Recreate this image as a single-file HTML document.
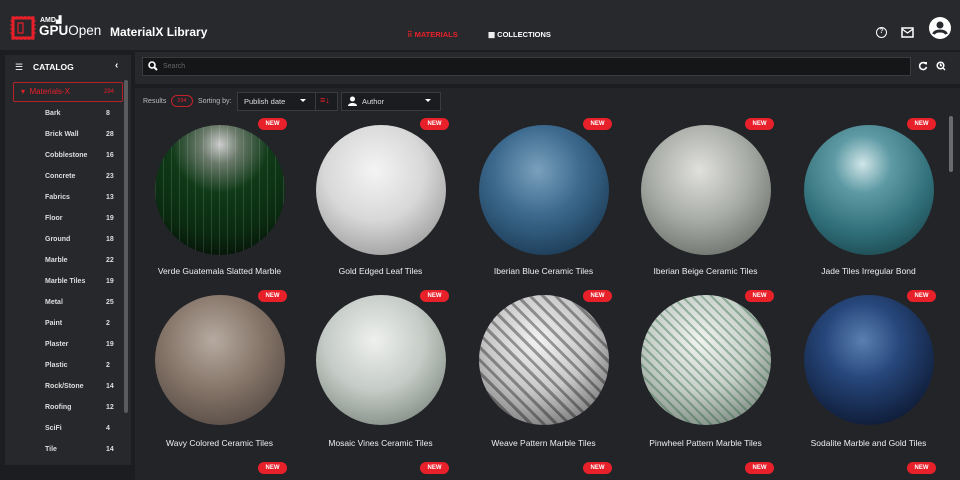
<!DOCTYPE html>
<html><head><meta charset="utf-8"><style>
*{margin:0;padding:0;box-sizing:border-box}
body{width:960px;height:480px;background:#1c1d20;font-family:"Liberation Sans",sans-serif;color:#e6e6e6;position:relative;overflow:hidden;font-size:8px}
.hdr{position:absolute;left:0;top:0;width:960px;height:50px;background:#28292d}
.abs{position:absolute}
.side{position:absolute;left:5px;top:55px;width:126px;height:410px;background:#27282c}
.main{position:absolute;left:135px;top:88px;width:825px;height:392px;background:#232428}
.srch{position:absolute;left:135px;top:52px;width:825px;height:32px;background:#27282c}
.item{position:absolute;left:45px;font-size:7px;font-weight:bold;color:#ddd}
.cnt{position:absolute;left:106px;font-size:7px;font-weight:bold;color:#ddd}
.sph{position:absolute;width:130px;height:130px;border-radius:50%}
.new{position:absolute;width:29px;height:12px;border-radius:6px;background:#e8202a;color:#fff;font-size:6px;font-weight:bold;text-align:center;line-height:12px}
.ttl{position:absolute;width:163px;text-align:center;font-size:8.5px;color:#eee}
</style></head><body>
<div class="hdr"></div>
<svg class="abs" style="left:9px;top:15px" width="28" height="26"><rect x="4" y="3" width="20" height="20" fill="none" stroke="#e8202a" stroke-width="3"/><path d="M4 1v2M8 1v2M12 1v2M16 1v2M20 1v2M24 1v2M4 23v2M8 23v2M12 23v2M16 23v2M20 23v2M24 23v2M1 6h3M1 10h3M1 14h3M1 18h3M24 6h3M24 10h3M24 14h3M24 18h3" stroke="#e8202a"/><rect x="9" y="8" width="5" height="10" fill="none" stroke="#e8202a" stroke-width="1.2"/></svg>
<div class="abs" style="left:40px;top:16px;font-size:7px;font-weight:bold;color:#fff">AMD▟</div>
<div class="abs" style="left:39px;top:23px;font-size:13.5px;color:#fff"><b>GPU</b>Open</div>
<div class="abs" style="left:110px;top:25px;font-size:12px;font-weight:bold;color:#fff">MaterialX Library</div>
<div class="abs" style="left:407px;top:30px;font-size:7.5px;font-weight:bold;color:#e8202a">⠿ MATERIALS</div>
<div class="abs" style="left:488px;top:30px;font-size:7.5px;font-weight:bold;color:#fff">▦ COLLECTIONS</div>
<div class="abs" style="left:876px;top:27px;width:11px;height:11px;border:1.5px solid #fff;border-radius:50%;font-size:7px;text-align:center;line-height:8px;font-weight:bold">?</div>
<svg class="abs" style="left:901px;top:27px" width="13" height="11"><rect x="1" y="1" width="11" height="9" fill="none" stroke="#fff" stroke-width="1.5"/><path d="M1 2l5.5 4 5.5-4" stroke="#fff" stroke-width="1.3" fill="none"/></svg>
<svg class="abs" style="left:929px;top:17px" width="22" height="22"><circle cx="11" cy="11" r="11" fill="#fff"/><circle cx="11" cy="8" r="3.5" fill="#28292d"/><path d="M4.5 17c2-4 11-4 13 0" stroke="#28292d" stroke-width="3" fill="none"/></svg>

<div class="side"></div>
<div class="abs" style="left:15px;top:62px;font-size:9px;color:#fff">☰</div>
<div class="abs" style="left:33px;top:62px;font-size:8.5px;font-weight:bold;color:#fff">CATALOG</div>
<div class="abs" style="left:115px;top:60px;font-size:10px;font-weight:bold;color:#fff">‹</div>
<div class="abs" style="left:13px;top:82px;width:110px;height:20px;border:1px solid #b5222a;border-radius:2px"></div>
<div class="abs" style="left:21px;top:87px;font-size:8px;color:#e8202a">▾ &nbsp;Materials-X</div>
<div class="abs" style="left:104px;top:89px;font-size:6px;color:#e8202a">294</div>
<div class="abs" style="left:124px;top:80px;width:4px;height:333px;background:#5a5b5f;border-radius:2px"></div>
<div class="item" style="top:110px">Bark</div><div class="cnt" style="top:110px">8</div>
<div class="item" style="top:131px">Brick Wall</div><div class="cnt" style="top:131px">28</div>
<div class="item" style="top:152px">Cobblestone</div><div class="cnt" style="top:152px">16</div>
<div class="item" style="top:173px">Concrete</div><div class="cnt" style="top:173px">23</div>
<div class="item" style="top:194px">Fabrics</div><div class="cnt" style="top:194px">13</div>
<div class="item" style="top:215px">Floor</div><div class="cnt" style="top:215px">19</div>
<div class="item" style="top:236px">Ground</div><div class="cnt" style="top:236px">18</div>
<div class="item" style="top:257px">Marble</div><div class="cnt" style="top:257px">22</div>
<div class="item" style="top:278px">Marble Tiles</div><div class="cnt" style="top:278px">19</div>
<div class="item" style="top:299px">Metal</div><div class="cnt" style="top:299px">25</div>
<div class="item" style="top:320px">Paint</div><div class="cnt" style="top:320px">2</div>
<div class="item" style="top:341px">Plaster</div><div class="cnt" style="top:341px">19</div>
<div class="item" style="top:362px">Plastic</div><div class="cnt" style="top:362px">2</div>
<div class="item" style="top:383px">Rock/Stone</div><div class="cnt" style="top:383px">14</div>
<div class="item" style="top:404px">Roofing</div><div class="cnt" style="top:404px">12</div>
<div class="item" style="top:425px">SciFi</div><div class="cnt" style="top:425px">4</div>
<div class="item" style="top:446px">Tile</div><div class="cnt" style="top:446px">14</div>

<div class="srch"></div>
<div class="abs" style="left:142px;top:57px;width:769px;height:19px;background:#151618;border:1px solid #3a3b3f"></div>
<svg class="abs" style="left:148px;top:61px" width="10" height="10"><circle cx="4" cy="4" r="3" stroke="#fff" stroke-width="1.6" fill="none"/><path d="M6 6l3 3" stroke="#fff" stroke-width="2"/></svg>
<div class="abs" style="left:163px;top:63px;font-size:7px;color:#666">Search</div>
<svg class="abs" style="left:918px;top:61px" width="10" height="10"><path d="M8 3A3.5 3.5 0 1 0 8.5 6" stroke="#fff" stroke-width="1.6" fill="none"/><path d="M6 1h3v3z" fill="#fff"/></svg>
<svg class="abs" style="left:936px;top:61px" width="10" height="10"><circle cx="4.5" cy="4.5" r="3.3" stroke="#fff" stroke-width="1.5" fill="none"/><path d="M4.5 2.5v2h1.5M7 7l2 2" stroke="#fff" stroke-width="1.4" fill="none"/></svg>

<div class="main"></div>
<div class="abs" style="left:143px;top:98px;font-size:7px;color:#bbb">Results</div>
<div class="abs" style="left:171px;top:95px;width:22px;height:12px;border:1px solid #c5222a;border-radius:6px;font-size:5.5px;color:#e8202a;text-align:center;line-height:10px">294</div>
<div class="abs" style="left:198px;top:98px;font-size:7px;color:#bbb">Sorting by:</div>
<div class="abs" style="left:237px;top:92px;width:101px;height:19px;background:#1b1c1f;border:1px solid #3a3b3f"></div>
<div class="abs" style="left:244px;top:97px;font-size:7.5px;color:#ddd">Publish date</div>
<div class="abs" style="left:300px;top:99px;width:0;height:0;border-left:3px solid transparent;border-right:3px solid transparent;border-top:3px solid #fff"></div>
<div class="abs" style="left:315px;top:92px;width:1px;height:19px;background:#3a3b3f"></div>
<div class="abs" style="left:320px;top:95px;font-size:9px;color:#e8202a;font-weight:bold">≡↓</div>
<div class="abs" style="left:341px;top:92px;width:100px;height:19px;background:#1b1c1f;border:1px solid #3a3b3f"></div>
<svg class="abs" style="left:348px;top:96px" width="9" height="10"><circle cx="4.5" cy="3" r="2.5" fill="#fff"/><path d="M0 10c0-4 9-4 9 0z" fill="#fff"/></svg>
<div class="abs" style="left:362px;top:97px;font-size:7.5px;color:#ddd">Author</div>
<div class="abs" style="left:425px;top:99px;width:0;height:0;border-left:3px solid transparent;border-right:3px solid transparent;border-top:3px solid #fff"></div>
<div class="abs" style="left:949px;top:116px;width:4px;height:56px;background:#6a6b6f;border-radius:2px"></div>

<div class="sph" style="left:155px;top:125px;background:repeating-linear-gradient(90deg,rgba(255,255,255,.12) 0 1px,transparent 1px 8px),radial-gradient(circle at 50% 15%,#ccc 0,#6a7a6a 15%,#0f3a18 38%,#0a2a10 70%,#040804 100%)"></div>
<div class="sph" style="left:316px;top:125px;background:radial-gradient(circle at 45% 35%,#f4f4f4 0,#d8d8d8 45%,#9a9a9a 85%,#555 100%)"></div>
<div class="sph" style="left:479px;top:125px;background:radial-gradient(circle at 45% 35%,#7aa0bc 0,#3c6a8e 40%,#1d3d58 80%,#0b1a28 100%)"></div>
<div class="sph" style="left:641px;top:125px;background:radial-gradient(circle at 45% 35%,#e0e0dc 0,#a8aca6 45%,#6a6e68 85%,#333 100%)"></div>
<div class="sph" style="left:804px;top:125px;background:radial-gradient(circle at 45% 30%,#cfe5e8 0,#5e9aa4 25%,#2f6e78 60%,#153a40 95%)"></div>
<div class="sph" style="left:155px;top:295px;background:radial-gradient(circle at 45% 35%,#b6aaa0 0,#857468 45%,#544a44 85%,#2a2522 100%)"></div>
<div class="sph" style="left:316px;top:295px;background:radial-gradient(circle at 45% 35%,#eef0ee 0,#c5cbc6 45%,#7e8a82 85%,#3a403c 100%)"></div>
<div class="sph" style="left:479px;top:295px;background:repeating-linear-gradient(45deg,rgba(0,0,0,.35) 0 3px,transparent 3px 9px),radial-gradient(circle at 45% 35%,#f2f2f2 0,#c8c8c8 45%,#777 85%,#333 100%)"></div>
<div class="sph" style="left:641px;top:295px;background:repeating-linear-gradient(45deg,rgba(20,90,50,.35) 0 2px,transparent 2px 7px),radial-gradient(circle at 45% 35%,#f0f2f0 0,#c8d0ca 45%,#7a887e 85%,#333 100%)"></div>
<div class="sph" style="left:804px;top:295px;background:radial-gradient(circle at 45% 35%,#5a7fb0 0,#26467a 35%,#11203e 75%,#050a14 100%)"></div>

<div class="new" style="left:258px;top:118px">NEW</div>
<div class="new" style="left:420px;top:118px">NEW</div>
<div class="new" style="left:583px;top:118px">NEW</div>
<div class="new" style="left:745px;top:118px">NEW</div>
<div class="new" style="left:907px;top:118px">NEW</div>
<div class="new" style="left:258px;top:290px">NEW</div>
<div class="new" style="left:420px;top:290px">NEW</div>
<div class="new" style="left:583px;top:290px">NEW</div>
<div class="new" style="left:745px;top:290px">NEW</div>
<div class="new" style="left:907px;top:290px">NEW</div>
<div class="new" style="left:258px;top:462px">NEW</div>
<div class="new" style="left:420px;top:462px">NEW</div>
<div class="new" style="left:583px;top:462px">NEW</div>
<div class="new" style="left:745px;top:462px">NEW</div>
<div class="new" style="left:907px;top:462px">NEW</div>

<div class="ttl" style="left:138px;top:266px">Verde Guatemala Slatted Marble</div>
<div class="ttl" style="left:299px;top:266px">Gold Edged Leaf Tiles</div>
<div class="ttl" style="left:462px;top:266px">Iberian Blue Ceramic Tiles</div>
<div class="ttl" style="left:624px;top:266px">Iberian Beige Ceramic Tiles</div>
<div class="ttl" style="left:787px;top:266px">Jade Tiles Irregular Bond</div>
<div class="ttl" style="left:138px;top:438px">Wavy Colored Ceramic Tiles</div>
<div class="ttl" style="left:299px;top:438px">Mosaic Vines Ceramic Tiles</div>
<div class="ttl" style="left:462px;top:438px">Weave Pattern Marble Tiles</div>
<div class="ttl" style="left:624px;top:438px">Pinwheel Pattern Marble Tiles</div>
<div class="ttl" style="left:787px;top:438px">Sodalite Marble and Gold Tiles</div>
</body></html>
